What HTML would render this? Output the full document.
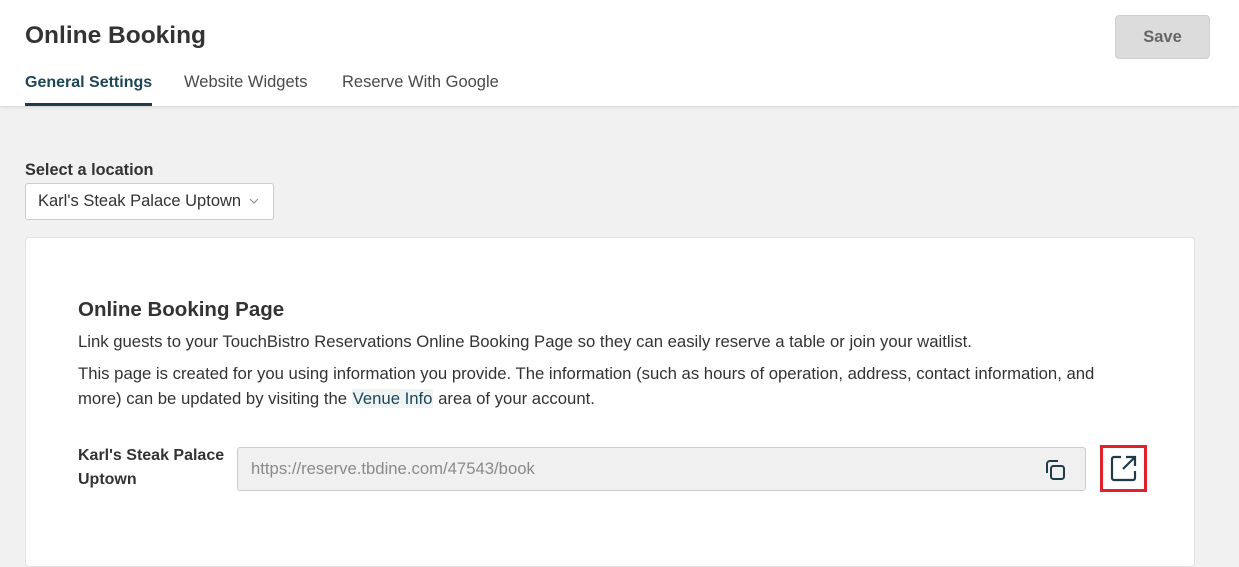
<!DOCTYPE html>
<html><head><style>
*{margin:0;padding:0;box-sizing:border-box}
body{width:1239px;height:553px;overflow:hidden;background:#f1f1f1;font-family:"Liberation Sans",sans-serif;color:#2b2b2b;position:relative}
.top{position:absolute;left:0;top:0;width:1239px;height:107px;background:#fff;border-bottom:1px solid #ddd;box-shadow:0 1px 3px rgba(0,0,0,.08)}
h1{position:absolute;left:25px;top:22px;font-size:24.5px;font-weight:bold;color:#333}
.tab{position:absolute;top:73px;font-size:16.5px;color:#4a4a4a}
.save{position:absolute;left:1115px;top:15px;width:95px;height:44px;background:#dcdcdc;border:1px solid #cfcfcf;border-radius:4px;font-size:16.5px;font-weight:bold;color:#666;text-align:center;line-height:42px}
.lbl{position:absolute;left:25px;top:161px;font-size:16.3px;font-weight:bold;color:#333}
.sel{position:absolute;left:25px;top:183px;width:249px;height:37px;background:#fff;border:1px solid #ccc;border-radius:3px;font-size:16.5px;padding-left:12px;line-height:35px;color:#333}
.card{position:absolute;left:25px;top:237px;width:1170px;height:330px;background:#fff;border:1px solid #e2e2e2;border-radius:4px}
.p{position:absolute;left:78px;font-size:16.7px;color:#333;line-height:25px;width:1060px}
.url{position:absolute;left:237px;top:447px;width:849px;height:44px;background:#f0f0f0;border:1px solid #ccc;border-radius:3px;font-size:16.7px;color:#8a8a8a;padding-left:13px;line-height:42px}
.ext{position:absolute;left:1100px;top:445px;width:47px;height:47px;border:3px solid #e0202a}
</style></head><body>
<div class="top">
<h1>Online Booking</h1>
<div class="tab" style="left:25px;top:74px;color:#1d4656;font-weight:bold;font-size:16px">General Settings</div>
<div style="position:absolute;left:25px;top:103px;width:127px;height:3px;background:#1d3d4a"></div>
<div class="tab" style="left:184px">Website Widgets</div>
<div class="tab" style="left:342px">Reserve With Google</div>
<div class="save">Save</div>
</div>
<div class="lbl">Select a location</div>
<div class="sel">Karl's Steak Palace Uptown <svg style="position:absolute;left:223px;top:14px" width="10" height="7" viewBox="0 0 10 7" fill="none" stroke="#888" stroke-width="1"><path d="M1 1l4 4 4-4"/></svg></div>
<div class="card"></div>
<div class="p" style="top:297px;font-size:20.5px;font-weight:bold">Online Booking Page</div>
<div class="p" style="top:329px">Link guests to your TouchBistro Reservations Online Booking Page so they can easily reserve a table or join your waitlist.</div>
<div class="p" style="top:361px">This page is created for you using information you provide. The information (such as hours of operation, address, contact information, and more) can be updated by visiting the <span style="background:#eef3f4;color:#1d4656;padding:0 1px">Venue Info</span> area of your account.</div>
<div class="p" style="top:444px;font-weight:bold;width:155px;line-height:24px;font-size:16px">Karl's Steak Palace Uptown</div>
<div class="url">https://reserve.tbdine.com/47543/book
<svg style="position:absolute;left:804px;top:9px" width="26" height="26" viewBox="0 0 26 26" fill="none" stroke="#1f3a48" stroke-width="2"><rect x="9" y="9" width="13" height="13" rx="2.5"/><path d="M5 16V7a3 3 0 0 1 3-3h8"/></svg></div>
<div class="ext"><svg style="position:absolute;left:6px;top:6px" width="29" height="29" viewBox="0 0 29 29" fill="none" stroke="#1f3a48" stroke-width="2.2"><path d="M12 3H5a2 2 0 0 0-2 2v19a2 2 0 0 0 2 2h19a2 2 0 0 0 2-2v-7"/><path d="M17 3h9v9M26 3L14 15"/></svg></div>
</body></html>
